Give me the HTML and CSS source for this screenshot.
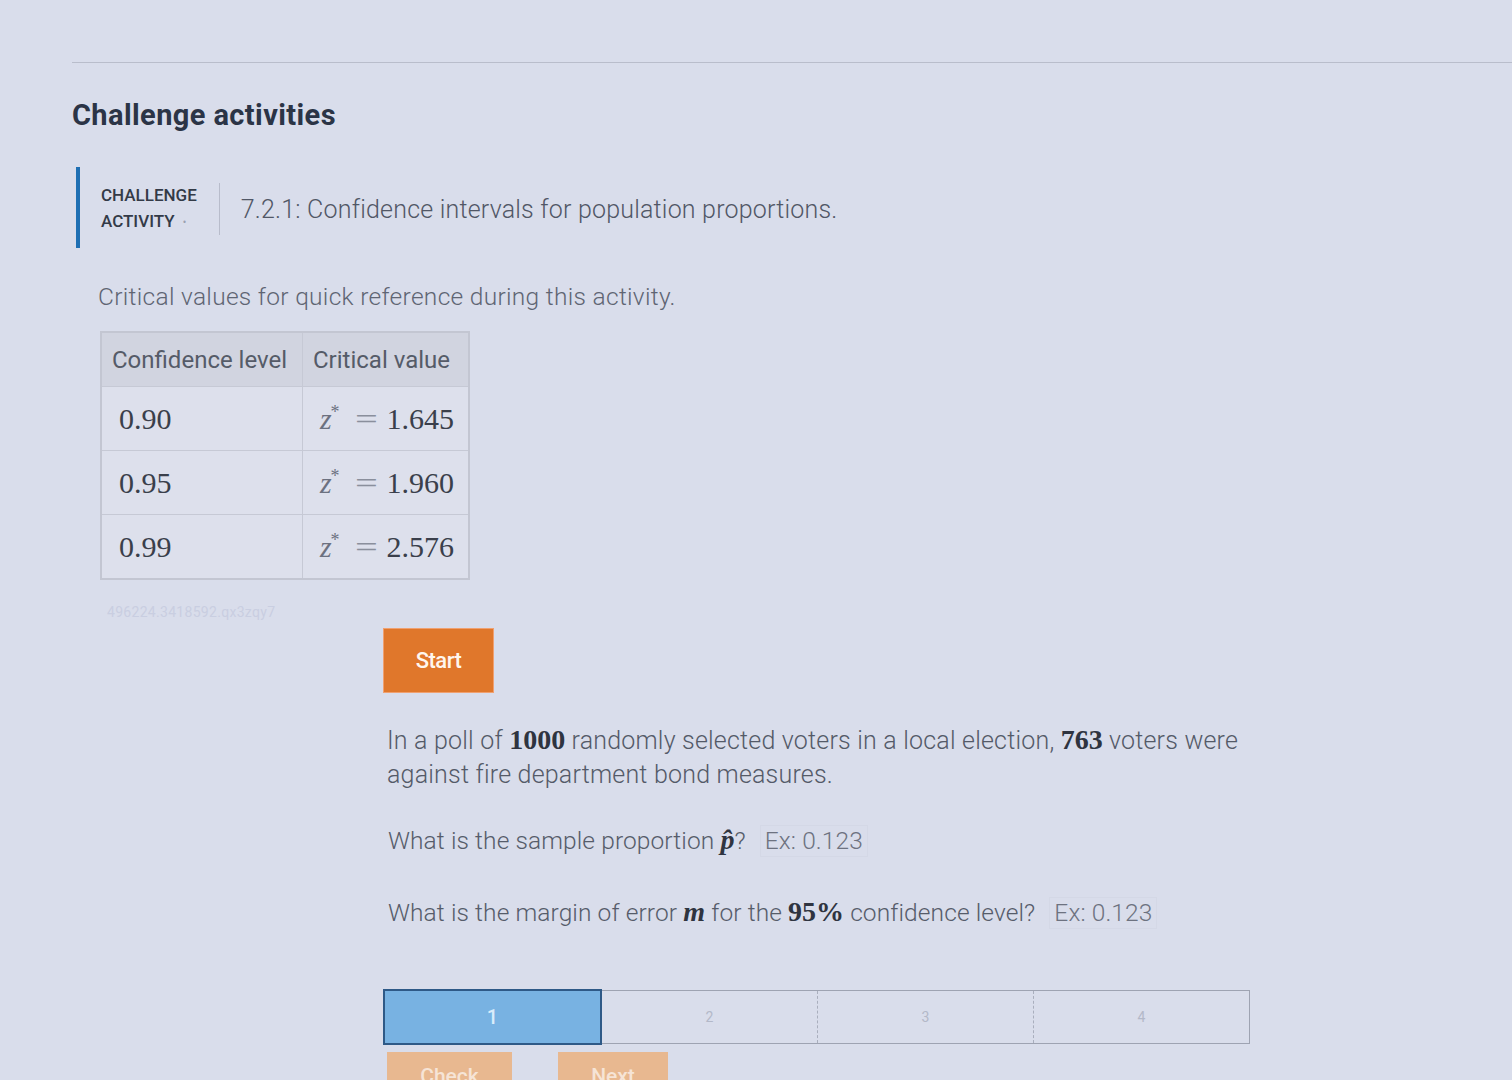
FILE: index.html
```html
<!DOCTYPE html>
<html lang="en">
<head>
<meta charset="utf-8">
<title>Challenge activities</title>
<link rel="stylesheet" href="styles.css">
</head>
<body>
<div class="page">
  <hr class="top-rule">
  <h2 class="section-title">Challenge activities</h2>

  <div class="activity-header">
    <div class="activity-bar"></div>
    <div class="activity-label">
      <div>CHALLENGE</div>
      <div>ACTIVITY <span class="dot">&#8226;</span></div>
    </div>
    <div class="activity-title">7.2.1: Confidence intervals for population proportions.</div>
  </div>

  <p class="ref-intro">Critical values for quick reference during this activity.</p>

  <table class="crit-table">
    <thead>
      <tr><th class="c1">Confidence level</th><th class="c2">Critical value</th></tr>
    </thead>
    <tbody>
      <tr><td class="num">0.90</td><td class="val"><span class="mi">z</span><sup>*</sup><span class="eq">=</span>1.645</td></tr>
      <tr><td class="num">0.95</td><td class="val"><span class="mi">z</span><sup>*</sup><span class="eq">=</span>1.960</td></tr>
      <tr><td class="num">0.99</td><td class="val"><span class="mi">z</span><sup>*</sup><span class="eq">=</span>2.576</td></tr>
    </tbody>
  </table>

  <div class="activity-id">496224.3418592.qx3zqy7</div>

  <div class="activity-body">
    <button class="btn-start">Start</button>

    <p class="problem">In a poll of <span class="m">1000</span> randomly selected voters in a local election, <span class="m">763</span> voters were against fire department bond measures.</p>

    <div class="question">What is the sample proportion <span class="m-it">p&#770;</span>? <span class="answer">Ex: 0.123</span></div>

    <div class="question q2">What is the margin of error <span class="m-it">m</span> for the <span class="m">95%</span> confidence level? <span class="answer">Ex: 0.123</span></div>

    <div class="progress">
      <div class="step active">1</div>
      <div class="step">2</div>
      <div class="step">3</div>
      <div class="step">4</div>
    </div>

    <div class="actions">
      <button class="btn-faded btn-check">Check</button>
      <button class="btn-faded btn-next">Next</button>
    </div>
  </div>
</div>
</body>
</html>
```

FILE: styles.css
```css
html, body {
  margin: 0;
  padding: 0;
  background: #d9ddeb;
  overflow: hidden;
}
body {
  font-family: Roboto, "Liberation Sans", sans-serif;
  color: #4a4f5c;
  height: 1080px;
}
.page {
  padding-top: 62px;
  padding-left: 72px;
}
.top-rule {
  margin: 0;
  border: 0;
  border-top: 1px solid #b9bdcb;
  height: 0;
}
.section-title {
  margin: 33px 0 0 0;
  font-size: 29px;
  font-weight: 700;
  line-height: 38px;
  color: #2b3446;
  letter-spacing: 0.4px;
}
.activity-header {
  display: flex;
  align-items: center;
  margin-top: 33px;
  height: 81px;
  margin-left: 4px;
}
.activity-bar {
  width: 4px;
  height: 81px;
  background: #1f6fb3;
  align-self: stretch;
}
.activity-label {
  padding-left: 21px;
  padding-right: 22px;
  font-size: 17px;
  font-weight: 500;
  line-height: 26px;
  color: #333a47;
  border-right: 1px solid #b8bccb;
  margin-top: 3px;
  height: 52px;
  display: flex;
  flex-direction: column;
  justify-content: center;
  letter-spacing: 0px;
}
.dot {
  font-size: 10px;
  color: #9aa0b0;
  vertical-align: middle;
  margin-left: 4px;
}
.activity-title {
  padding-left: 21px;
  font-size: 25px;
  font-weight: 300;
  color: #515766;
  margin-top: 4px;
  letter-spacing: 0.2px;
}
.ref-intro {
  margin: 34px 0 0 26px;
  font-size: 24.5px;
  font-weight: 300;
  color: #5f6573;
  line-height: 30px;
  letter-spacing: 0.3px;
}
.crit-table {
  margin: 19px 0 0 28px;
  border-collapse: collapse;
  background: #dde0ec;
  border: 2px solid #c3c6d2;
  table-layout: fixed;
  width: 367px;
}
.crit-table th {
  background: #d1d4e0;
  font-weight: 400;
  font-size: 24px;
  color: #555b68;
  height: 53px;
  padding: 0 0 0 10px;
  text-align: left;
  border: 1px solid #c6c9d5;
  white-space: nowrap;
}
.crit-table th.c1 { width: 190px; }
.crit-table th.c2 { width: 155px; }
.crit-table td {
  height: 61px;
  border: 1px solid #c6c9d5;
  font-family: "Liberation Serif", "DejaVu Serif", serif;
  font-size: 30px;
  color: #3a3f4b;
}
.crit-table td.num {
  padding-left: 17px;
}
.crit-table td.val {
  text-align: right;
  padding-right: 14px;
  white-space: nowrap;
}
.mi {
  font-style: italic;
  color: #6c7180;
}
.crit-table sup {
  font-size: 18px;
  color: #6c7180;
  vertical-align: 11px;
  line-height: 0;
  margin-left: -1px;
}
.eq {
  color: #8a8f9c;
  margin: 0 12px 0 18px;
  display: inline-block;
  transform: scaleX(1.35);
}
.activity-id {
  margin: 24px 0 0 35px;
  font-size: 14px;
  color: #c9cee1;
  letter-spacing: 0.3px;
}
.activity-body {
  margin-left: 311px;
  margin-top: 8px;
}
.btn-start {
  display: block;
  width: 111px;
  height: 65px;
  background: #e0772b;
  color: #fff6ee;
  border: 1px solid #f0a070;
  font-family: Roboto, "Liberation Sans", sans-serif;
  font-size: 22px;
  font-weight: 500;
  letter-spacing: -0.5px;
  padding: 0;
  cursor: pointer;
}
.problem {
  margin: 31px 0 0 4px;
  width: 880px;
  font-size: 25px;
  font-weight: 300;
  line-height: 34px;
  color: #545a68;
  letter-spacing: 0.2px;
}
.m {
  font-family: "Liberation Serif", "DejaVu Serif", serif;
  font-weight: 700;
  font-size: 28px;
  line-height: 1;
  color: #2f3440;
  letter-spacing: 0;
}
.m-it {
  font-family: "Liberation Serif", "DejaVu Serif", serif;
  font-style: italic;
  font-weight: 700;
  font-size: 28px;
  line-height: 1;
  color: #2f3440;
}
.question {
  margin: 32px 0 0 5px;
  font-size: 24.5px;
  font-weight: 300;
  line-height: 34px;
  color: #565c6a;
  letter-spacing: 0.1px;
}
.q2 {
  margin-top: 38px;
}
.answer {
  display: inline-block;
  margin-left: 8px;
  padding: 0 4px;
  line-height: 30px;
  color: #6d7280;
  border: 1px solid #d4d8e6;
}
.progress {
  display: flex;
  margin-top: 60px;
  width: 866px;
  height: 54px;
  margin-left: 1px;
  border: 1px solid #9ea3b2;
  box-sizing: border-box;
}
.step {
  flex: 1;
  display: flex;
  align-items: center;
  justify-content: center;
  font-size: 14px;
  color: #b3b8c8;
  border-left: 1px dashed #a9aebd;
}
.step:nth-child(2) {
  border-left: none;
}
.step.active {
  flex: 0 0 219px;
  margin: -2px 0 -2px -2px;
  background: #78b2e2;
  border: 2px solid #2e5987;
  color: #d9ecfb;
  font-size: 20px;
  font-weight: 500;
  box-sizing: border-box;
}
.actions {
  display: flex;
  gap: 46px;
  margin-top: 8px;
  margin-left: 4px;
}
.btn-faded {
  height: 60px;
  background: #e8b890;
  color: #f6e4d6;
  border: 0;
  font-family: Roboto, "Liberation Sans", sans-serif;
  font-size: 21px;
  font-weight: 500;
  padding: 12px 0 0 0;
  display: flex;
  justify-content: center;
  align-items: flex-start;
}
.btn-check { width: 125px; }
.btn-next { width: 110px; }
```
